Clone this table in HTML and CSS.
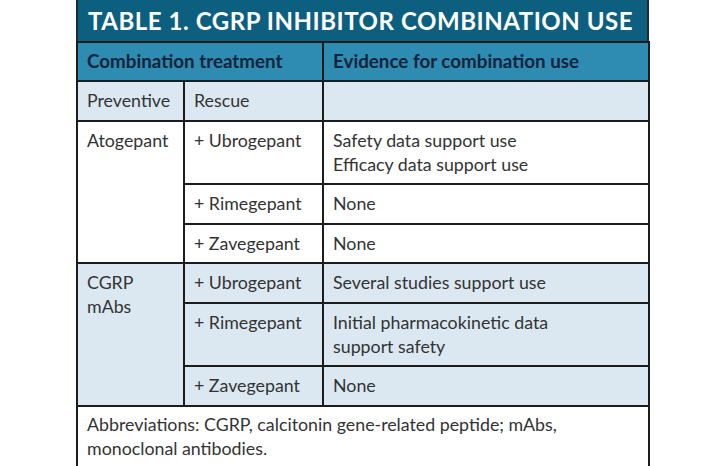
FILE: index.html
```html
<!DOCTYPE html>
<html lang="en">
<head>
<meta charset="utf-8">
<title>Table 1. CGRP Inhibitor Combination Use</title>
<link rel="stylesheet" href="styles.css">
</head>
<body>
<div class="card">
  <div class="title">TABLE 1. CGRP INHIBITOR COMBINATION USE</div>
  <table class="grid">
    <colgroup>
      <col class="c1">
      <col class="c2">
      <col class="c3">
    </colgroup>
    <thead>
      <tr>
        <th colspan="2">Combination treatment</th>
        <th>Evidence for combination use</th>
      </tr>
    </thead>
    <tbody>
      <tr class="alt">
        <td>Preventive</td>
        <td>Rescue</td>
        <td></td>
      </tr>
      <tr>
        <td rowspan="3">Atogepant</td>
        <td>+ Ubrogepant</td>
        <td>Safety data support use<br>Efficacy data support use</td>
      </tr>
      <tr>
        <td>+ Rimegepant</td>
        <td>None</td>
      </tr>
      <tr>
        <td>+ Zavegepant</td>
        <td>None</td>
      </tr>
      <tr class="alt">
        <td rowspan="3">CGRP<br>mAbs</td>
        <td>+ Ubrogepant</td>
        <td>Several studies support use</td>
      </tr>
      <tr class="alt">
        <td>+ Rimegepant</td>
        <td>Initial pharmacokinetic data<br>support safety</td>
      </tr>
      <tr class="alt">
        <td>+ Zavegepant</td>
        <td>None</td>
      </tr>
    </tbody>
    <tfoot>
      <tr>
        <td colspan="3">Abbreviations: CGRP, calcitonin gene-related peptide; mAbs,<br>monoclonal antibodies.</td>
      </tr>
    </tfoot>
  </table>
</div>
</body>
</html>
```

FILE: styles.css
```css
html, body {
  margin: 0;
  padding: 0;
  background: #ffffff;
}

body {
  font-family: Lato, "Open Sans", "Liberation Sans", sans-serif;
  color: #333333;
}

.card {
  margin-left: 76px;
  width: 573px;
}

.title {
  height: 41px;
  box-sizing: border-box;
  background: #0d5f80;
  color: #ffffff;
  font-weight: 700;
  font-size: 24px;
  letter-spacing: 0.55px;
  line-height: 41px;
  padding-left: 10px;
  border-left: 2px solid #1b2a33;
  border-right: 2px solid #1b2a33;
  white-space: nowrap;
}

.grid {
  width: 572px;
  border-collapse: collapse;
  table-layout: fixed;
}

.c1 { width: 107px; }
.c2 { width: 139px; }
.c3 { width: 326px; }

.grid th,
.grid td {
  border: 2px solid #1c1c1c;
  text-align: left;
  vertical-align: top;
  font-size: 17.8px;
  line-height: 24px;
  padding: 6px 9px 7.5px 9px;
}

.grid th {
  background: #2e8cb2;
  color: #13243a;
  font-weight: 700;
  font-size: 18.8px;
  padding-top: 6px;
  padding-bottom: 7px;
}

.grid td {
  font-weight: 400;
}

.alt td {
  background: #dce8f1;
}

.grid tfoot td {
  background: #ffffff;
  padding-top: 5px;
  padding-bottom: 12px;
  border-bottom: none;
}
```
